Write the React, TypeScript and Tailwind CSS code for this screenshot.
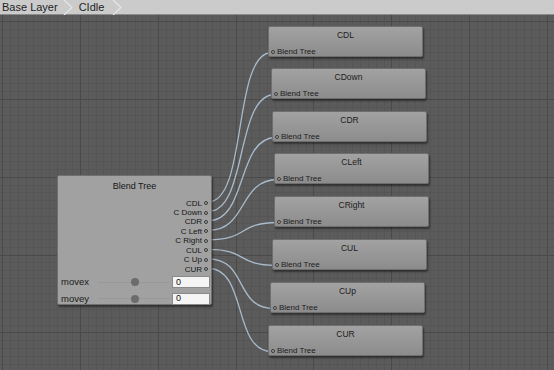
import React from "react";

const states = [
  { n: "CDL", x: 268, y: 26 },
  { n: "CDown", x: 271, y: 68 },
  { n: "CDR", x: 272, y: 111 },
  { n: "CLeft", x: 274, y: 153 },
  { n: "CRight", x: 274, y: 196 },
  { n: "CUL", x: 272, y: 239 },
  { n: "CUp", x: 270, y: 282 },
  { n: "CUR", x: 268, y: 325 },
];

const outputs = ["CDL", "C Down", "CDR", "C Left", "C Right", "CUL", "C Up", "CUR"];
const TOP = 15;
const OUT_X = 208;
const OUT_Y0 = 202;
const OUT_STEP = 9.47;

function Grid() {
  const minor = 7.78;
  const major = 77.8;
  const w = 554;
  const h = 370 - TOP;
  const vx: number[] = [];
  const hy: number[] = [];
  for (let x = 2.3 - major; x < w; x += minor) vx.push(x);
  for (let y = 6.2 - major; y < h; y += minor) hy.push(y);
  const isMajor = (v: number, o: number) => {
    const k = (v - o) / major;
    return Math.abs(k - Math.round(k)) < 0.01;
  };
  return (
    <svg className="absolute inset-0" width={w} height={h}>
      <rect width={w} height={h} fill="#5b5b5b" />
      {vx.filter((x) => !isMajor(x, 2.3)).map((x, i) => (
        <line key={"v" + i} x1={Math.round(x) + 0.5} x2={Math.round(x) + 0.5} y1={0} y2={h} stroke="#555555" strokeWidth={1} />
      ))}
      {hy.filter((y) => !isMajor(y, 6.2)).map((y, i) => (
        <line key={"h" + i} y1={Math.round(y) + 0.5} y2={Math.round(y) + 0.5} x1={0} x2={w} stroke="#555555" strokeWidth={1} />
      ))}
      {vx.filter((x) => isMajor(x, 2.3)).map((x, i) => (
        <line key={"V" + i} x1={Math.round(x) + 0.5} x2={Math.round(x) + 0.5} y1={0} y2={h} stroke="#4a4a4a" strokeWidth={1} />
      ))}
      {hy.filter((y) => isMajor(y, 6.2)).map((y, i) => (
        <line key={"H" + i} y1={Math.round(y) + 0.5} y2={Math.round(y) + 0.5} x1={0} x2={w} stroke="#4a4a4a" strokeWidth={1} />
      ))}
    </svg>
  );
}

function Wires() {
  return (
    <svg className="absolute inset-0" width={554} height={370 - TOP}>
      {states.map((s, i) => {
        const x1 = OUT_X;
        const y1 = OUT_Y0 + i * OUT_STEP - TOP;
        const x2 = s.x + 4;
        const y2 = s.y + 26.5 - TOP;
        const d = 40;
        return (
          <path
            key={s.n}
            d={`M ${x1} ${y1} C ${x1 + d} ${y1}, ${x2 - d} ${y2}, ${x2} ${y2}`}
            fill="none"
            stroke="#a9bacb"
            strokeWidth={1.3}
          />
        );
      })}
    </svg>
  );
}

function Port() {
  return <span className="block h-[4px] w-[4px] shrink-0 rounded-full border border-[#3a3a3a] bg-[#a0a0a0]" />;
}

function StateNode({ n, x, y }: { n: string; x: number; y: number }) {
  return (
    <div
      className="absolute flex h-[31px] w-[155px] flex-col rounded-[2px] border border-[#6e6e6e] bg-[linear-gradient(#a2a2a2,#8c8c8c)] shadow-[1px_2px_2px_rgba(0,0,0,0.45)]"
      style={{ left: x, top: y - TOP }}
    >
      <div className="h-[17px] shrink-0 text-center text-[8.5px] leading-[16px] text-[#1c1c1c]">{n}</div>
      <div className="mt-auto flex h-[9px] shrink-0 items-center gap-[2px] pl-[2px] text-[8px] leading-[9px] text-[#1c1c1c]">
        <Port />
        <span>Blend Tree</span>
      </div>
    </div>
  );
}

function ParamRow({ label }: { label: string }) {
  return (
    <div className="flex h-[16.5px] items-center">
      <span className="w-[40px] pl-[3px] text-[9.5px] text-[#1a1a1a]">{label}</span>
      <div className="relative flex h-full w-[72px] items-center">
        <div className="h-[1px] w-full bg-[#989898]" />
        <span className="absolute left-[33px] h-[8px] w-[8px] rounded-full bg-[#6c6c6c]" />
      </div>
      <div className="ml-auto mr-[1px] flex h-[12px] w-[38px] items-center border border-[#8a8a8a] bg-[#f5f5f5] pl-[3px] text-[9px] text-[#111]">
        0
      </div>
    </div>
  );
}

function BlendTree() {
  return (
    <div className="absolute left-[57px] top-[160px] flex h-[130px] w-[155px] flex-col rounded-[2px] border border-[#707070] bg-[#a1a1a1] shadow-[1px_2px_2px_rgba(0,0,0,0.45)]">
      <div className="h-[20px] text-center text-[9px] leading-[20px] text-[#161616]">Blend Tree</div>
      <div className="flex flex-col pt-[2.3px]">
        {outputs.map((o) => (
          <div key={o} className="flex h-[9.47px] items-center justify-end gap-[2px] pr-[3px] text-[8px] leading-[9px] text-[#161616]">
            <span>{o}</span>
            <Port />
          </div>
        ))}
      </div>
      <div className="mt-auto flex flex-col pb-[0.5px]">
        <ParamRow label="movex" />
        <ParamRow label="movey" />
      </div>
    </div>
  );
}

function Chevron() {
  return (
    <svg width="12" height="15" viewBox="0 0 12 15" className="shrink-0">
      <polyline points="1,0 9,7.5 1,15" fill="none" stroke="#e6e6e6" strokeWidth="1.2" />
    </svg>
  );
}

export default function App() {
  return (
    <div className="flex h-[370px] w-[554px] flex-col overflow-hidden bg-[#5b5b5b] font-['Liberation_Sans',Arial,sans-serif]">
      <div className="flex h-[15px] shrink-0 items-center border-b border-[#8c8c8c] bg-[#cbcbcb] text-[11px] leading-[15px] text-[#1e1e1e]">
        <span className="pl-[2px]">Base Layer</span>
        <span className="ml-[5px]"><Chevron /></span>
        <span className="ml-[4px]">CIdle</span>
        <span className="ml-[8px]"><Chevron /></span>
      </div>
      <div className="relative flex-1">
        <Grid />
        <Wires />
        <BlendTree />
        {states.map((s) => (
          <StateNode key={s.n} {...s} />
        ))}
      </div>
    </div>
  );
}
